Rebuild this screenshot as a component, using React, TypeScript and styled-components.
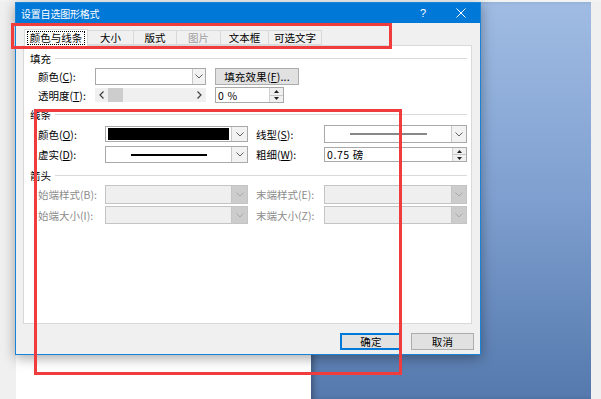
import React from "react";
import styled, { createGlobalStyle } from "styled-components";

const Global = createGlobalStyle`
  html, body { margin: 0; padding: 0; background: #f3f3f3; }
  body { font-family: "Noto Sans CJK SC", "Noto Sans", sans-serif; }
  #root { width: 601px; height: 399px; overflow: hidden; }
`;

const Desktop = styled.div`
  position: relative;
  width: 601px;
  height: 399px;
  box-sizing: border-box;
  padding-top: 2px;
  display: flex;
  background: #f3f3f3;
`;

const Gutter = styled.div<{ $w?: number }>`
  flex: ${(p) => (p.$w ? "none" : "1")};
  width: ${(p) => (p.$w ? `${p.$w}px` : "auto")};
  background: #f0f0f0;
`;

const DocPage = styled.div`
  width: 295px;
  flex: none;
  background: #ffffff;
`;

const Backdrop = styled.div`
  width: 280px;
  flex: none;
  background: linear-gradient(180deg, #a0bce3 0%, #7e9fcf 50%, #5579ad 100%);
  box-shadow: inset 5px 0 6px -3px rgba(0, 0, 0, 0.35);
`;

const Dialog = styled.div`
  position: absolute;
  left: 15px;
  top: 2px;
  width: 466px;
  height: 353px;
  box-sizing: border-box;
  border: 1px solid #1883d7;
  background: #f0f0f0;
  display: flex;
  flex-direction: column;
  box-shadow: 0 3px 12px rgba(0, 0, 0, 0.35);
`;

const TitleBar = styled.div`
  height: 20px;
  flex: none;
  background: #0078d7;
  display: flex;
  align-items: center;
  padding-left: 5px;
  color: #ffffff;
  font-size: 10px;
`;

const TitleText = styled.div`
  flex: 1;
  letter-spacing: -0.2px;
`;

const HelpGlyph = styled.div`
  font-family: "Liberation Sans", sans-serif;
  font-size: 11px;
  width: 8px;
  text-align: center;
  margin-right: 29px;
`;

const CloseBox = styled.div`
  width: 10px;
  height: 10px;
  margin-right: 14px;
  display: flex;
`;

const Body = styled.div`
  flex: 1;
  display: flex;
  flex-direction: column;
  padding: 6px 8px 0 7px;
`;

const TabRow = styled.div`
  height: 17px;
  display: flex;
  align-items: flex-end;
  padding-left: 1px;
  margin-bottom: -1px;
  position: relative;
  z-index: 1;
`;

const Tab = styled.div<{ $w: number; $active?: boolean; $disabled?: boolean }>`
  width: ${(p) => p.$w}px;
  height: ${(p) => (p.$active ? 17 : 15)}px;
  margin-bottom: ${(p) => (p.$active ? 0 : 1)}px;
  margin-right: -1px;
  box-sizing: border-box;
  border: 1px solid #d9d9d9;
  border-bottom: ${(p) => (p.$active ? "none" : "1px solid #d9d9d9")};
  background: ${(p) => (p.$active ? "#ffffff" : "#f0f0f0")};
  color: ${(p) => (p.$disabled ? "#a0a0a0" : "#000000")};
  font-size: 10.5px;
  display: flex;
  align-items: center;
  justify-content: center;
  position: relative;
  z-index: ${(p) => (p.$active ? 2 : 1)};
`;

const Focus = styled.span`
  border: 1px dotted #000000;
  padding: 0 2px;
  line-height: 12px;
`;

const Panel = styled.div`
  height: 279px;
  flex: none;
  box-sizing: border-box;
  border: 1px solid #d9d9d9;
  background: #ffffff;
  padding: 0 4px 0 6px;
  display: flex;
  flex-direction: column;
  position: relative;
  z-index: 0;
`;

const SectionHeader = styled.div<{ $mt: number }>`
  height: 12px;
  margin-top: ${(p) => p.$mt}px;
  display: flex;
  align-items: center;
  font-size: 10.5px;
  color: #000000;
  &::after {
    content: "";
    flex: 1;
    height: 1px;
    background: #dadada;
    margin-left: 4px;
  }
`;

const Row = styled.div<{ $mt: number; $h: number }>`
  height: ${(p) => p.$h}px;
  margin-top: ${(p) => p.$mt}px;
  display: flex;
  align-items: center;
  padding-left: 8px;
`;

const Label = styled.div<{ $w: number; $ml?: number; $disabled?: boolean }>`
  width: ${(p) => p.$w}px;
  margin-left: ${(p) => p.$ml ?? 0}px;
  flex: none;
  font-size: 10.5px;
  white-space: nowrap;
  color: ${(p) => (p.$disabled ? "#8c8c8c" : "#000000")};
  u { text-decoration: underline; text-underline-offset: 1px; }
`;

const Combo = styled.div<{ $w: number; $h: number; $disabled?: boolean; $ml?: number }>`
  width: ${(p) => p.$w}px;
  height: ${(p) => p.$h}px;
  margin-left: ${(p) => p.$ml ?? 0}px;
  flex: none;
  box-sizing: border-box;
  border: 1px solid ${(p) => (p.$disabled ? "#c4c4c4" : "#a9a9a9")};
  background: ${(p) => (p.$disabled ? "#efefef" : "#ffffff")};
  display: flex;
`;

const ComboField = styled.div`
  flex: 1;
  display: flex;
  align-items: center;
  justify-content: center;
  padding: 1px 2px;
`;

const Swatch = styled.div`
  align-self: stretch;
  flex: 1;
  background: #000000;
`;

const LineSample = styled.div<{ $w: number; $color: string; $t: number }>`
  width: ${(p) => p.$w}px;
  height: ${(p) => p.$t}px;
  background: ${(p) => p.$color};
`;

const ComboArrow = styled.div<{ $w: number; $disabled?: boolean }>`
  width: ${(p) => p.$w}px;
  flex: none;
  box-sizing: border-box;
  border-left: 1px solid ${(p) => (p.$disabled ? "#c4c4c4" : "#c8c8c8")};
  background: ${(p) => (p.$disabled ? "#cccccc" : "#f2f2f2")};
  display: flex;
  align-items: center;
  justify-content: center;
`;

const PushButton = styled.div<{ $w: number; $h: number; $ml?: number; $default?: boolean }>`
  width: ${(p) => p.$w}px;
  height: ${(p) => p.$h}px;
  margin-left: ${(p) => p.$ml ?? 0}px;
  flex: none;
  box-sizing: border-box;
  border: 1px solid ${(p) => (p.$default ? "#0078d7" : "#adadad")};
  box-shadow: ${(p) => (p.$default ? "inset 0 0 0 1px #0078d7" : "none")};
  background: #e1e1e1;
  font-size: 10.5px;
  color: #000000;
  display: flex;
  align-items: center;
  justify-content: center;
  white-space: nowrap;
  letter-spacing: 0.2px;
`;

const Slider = styled.div<{ $w: number; $h: number }>`
  width: ${(p) => p.$w}px;
  height: ${(p) => p.$h}px;
  flex: none;
  background: #f0f0f0;
  display: flex;
  align-items: stretch;
`;

const SliderArrow = styled.div<{ $w: number }>`
  width: ${(p) => p.$w}px;
  flex: none;
  display: flex;
  align-items: center;
  justify-content: center;
`;

const SliderThumb = styled.div`
  width: 15px;
  flex: none;
  background: #cdcdcd;
`;

const SliderTrack = styled.div`
  flex: 1;
`;

const Spin = styled.div<{ $w: number; $h: number; $ml?: number }>`
  width: ${(p) => p.$w}px;
  height: ${(p) => p.$h}px;
  margin-left: ${(p) => p.$ml ?? 0}px;
  flex: none;
  box-sizing: border-box;
  border: 1px solid #a9a9a9;
  background: #ffffff;
  display: flex;
`;

const SpinText = styled.div`
  flex: 1;
  display: flex;
  align-items: center;
  padding-left: 2px;
  font-size: 10.5px;
  color: #000000;
  letter-spacing: 0.6px;
  white-space: nowrap;
`;

const SpinButtons = styled.div`
  width: 13px;
  flex: none;
  display: flex;
  flex-direction: column;
  border-left: 1px solid #d0d0d0;
  background: #f0f0f0;
`;

const SpinHalf = styled.div<{ $top?: boolean }>`
  flex: 1;
  display: flex;
  align-items: center;
  justify-content: center;
  border-bottom: ${(p) => (p.$top ? "1px solid #c8c8c8" : "none")};
`;

const Footer = styled.div`
  display: flex;
  justify-content: flex-end;
  margin-top: 9px;
  margin-right: -2px;
`;

const Annotation = styled.div<{ $l: number; $t: number; $w: number; $h: number }>`
  position: absolute;
  left: ${(p) => p.$l}px;
  top: ${(p) => p.$t}px;
  width: ${(p) => p.$w}px;
  height: ${(p) => p.$h}px;
  box-sizing: border-box;
  border: 3px solid #f03c3c;
  pointer-events: none;
  z-index: 10;
`;

const Chevron = ({ color = "#606060" }: { color?: string }) => (
  <svg width="8" height="5" viewBox="0 0 8 5">
    <polyline points="0.5,0.5 4,4 7.5,0.5" fill="none" stroke={color} strokeWidth="1" />
  </svg>
);

const SideChevron = ({ dir }: { dir: "left" | "right" }) => (
  <svg width="5" height="8" viewBox="0 0 5 8">
    <polyline
      points={dir === "left" ? "4.5,0.5 1,4 4.5,7.5" : "0.5,0.5 4,4 0.5,7.5"}
      fill="none"
      stroke="#404040"
      strokeWidth="1.2"
    />
  </svg>
);

const Tri = ({ up }: { up?: boolean }) => (
  <svg width="5" height="3" viewBox="0 0 5 3">
    <polygon points={up ? "0,3 2.5,0 5,3" : "0,0 2.5,3 5,0"} fill="#202020" />
  </svg>
);

const SpinBox = ({ w, h, ml, text }: { w: number; h: number; ml?: number; text: string }) => (
  <Spin $w={w} $h={h} $ml={ml}>
    <SpinText>{text}</SpinText>
    <SpinButtons>
      <SpinHalf $top>
        <Tri up />
      </SpinHalf>
      <SpinHalf>
        <Tri />
      </SpinHalf>
    </SpinButtons>
  </Spin>
);

export default function App() {
  return (
    <>
      <Global />
      <Desktop>
        <Gutter $w={16} />
        <DocPage />
        <Backdrop />
        <Gutter />

        <Dialog>
          <TitleBar>
            <TitleText>设置自选图形格式</TitleText>
            <HelpGlyph>?</HelpGlyph>
            <CloseBox>
              <svg width="10" height="10" viewBox="0 0 10 10">
                <line x1="0.5" y1="0.5" x2="9.5" y2="9.5" stroke="#fff" strokeWidth="1" />
                <line x1="9.5" y1="0.5" x2="0.5" y2="9.5" stroke="#fff" strokeWidth="1" />
              </svg>
            </CloseBox>
          </TitleBar>

          <Body>
            <TabRow>
              <Tab $w={64} $active>
                <Focus>颜色与线条</Focus>
              </Tab>
              <Tab $w={47}>大小</Tab>
              <Tab $w={44}>版式</Tab>
              <Tab $w={45} $disabled>
                图片
              </Tab>
              <Tab $w={49}>文本框</Tab>
              <Tab $w={54}>可选文字</Tab>
            </TabRow>

            <Panel>
              <SectionHeader $mt={6}>填充</SectionHeader>
              <Row $mt={3} $h={18}>
                <Label $w={57}>
                  颜色(<u>C</u>):
                </Label>
                <Combo $w={111} $h={17}>
                  <ComboField />
                  <ComboArrow $w={13}>
                    <Chevron />
                  </ComboArrow>
                </Combo>
                <PushButton $w={84} $h={17} $ml={9}>
                  填充效果(<u>F</u>)...
                </PushButton>
              </Row>
              <Row $mt={2} $h={16}>
                <Label $w={57}>
                  透明度(<u>T</u>):
                </Label>
                <Slider $w={111} $h={14}>
                  <SliderArrow $w={13}>
                    <SideChevron dir="left" />
                  </SliderArrow>
                  <SliderThumb />
                  <SliderTrack />
                  <SliderArrow $w={13}>
                    <SideChevron dir="right" />
                  </SliderArrow>
                </Slider>
                <SpinBox w={69} h={16} ml={9} text="0 %" />
              </Row>

              <SectionHeader $mt={5}>线条</SectionHeader>
              <Row $mt={5} $h={18}>
                <Label $w={67}>
                  颜色(<u>O</u>):
                </Label>
                <Combo $w={143} $h={16}>
                  <ComboField>
                    <Swatch />
                  </ComboField>
                  <ComboArrow $w={16}>
                    <Chevron />
                  </ComboArrow>
                </Combo>
                <Label $w={68} $ml={8}>
                  线型(<u>S</u>):
                </Label>
                <Combo $w={143} $h={18}>
                  <ComboField>
                    <LineSample $w={77} $t={2} $color="#888888" />
                  </ComboField>
                  <ComboArrow $w={15}>
                    <Chevron />
                  </ComboArrow>
                </Combo>
              </Row>
              <Row $mt={3} $h={17}>
                <Label $w={67}>
                  虚实(<u>D</u>):
                </Label>
                <Combo $w={143} $h={17}>
                  <ComboField>
                    <LineSample $w={76} $t={2} $color="#000000" />
                  </ComboField>
                  <ComboArrow $w={16}>
                    <Chevron />
                  </ComboArrow>
                </Combo>
                <Label $w={68} $ml={8}>
                  粗细(<u>W</u>):
                </Label>
                <SpinBox w={143} h={15} text="0.75 磅" />
              </Row>

              <SectionHeader $mt={6}>箭头</SectionHeader>
              <Row $mt={4} $h={19}>
                <Label $w={67} $disabled>
                  始端样式(B):
                </Label>
                <Combo $w={143} $h={19} $disabled>
                  <ComboField />
                  <ComboArrow $w={16} $disabled>
                    <Chevron color="#a8a8a8" />
                  </ComboArrow>
                </Combo>
                <Label $w={68} $ml={8} $disabled>
                  末端样式(E):
                </Label>
                <Combo $w={143} $h={19} $disabled>
                  <ComboField />
                  <ComboArrow $w={15} $disabled>
                    <Chevron color="#a8a8a8" />
                  </ComboArrow>
                </Combo>
              </Row>
              <Row $mt={2} $h={18}>
                <Label $w={67} $disabled>
                  始端大小(I):
                </Label>
                <Combo $w={143} $h={18} $disabled>
                  <ComboField />
                  <ComboArrow $w={16} $disabled>
                    <Chevron color="#a8a8a8" />
                  </ComboArrow>
                </Combo>
                <Label $w={68} $ml={8} $disabled>
                  末端大小(Z):
                </Label>
                <Combo $w={143} $h={18} $disabled>
                  <ComboField />
                  <ComboArrow $w={15} $disabled>
                    <Chevron color="#a8a8a8" />
                  </ComboArrow>
                </Combo>
              </Row>
            </Panel>

            <Footer>
              <PushButton $w={62} $h={17} $default>
                确定
              </PushButton>
              <PushButton $w={63} $h={17} $ml={9}>
                取消
              </PushButton>
            </Footer>
          </Body>
        </Dialog>

        <Annotation $l={11} $t={23} $w={381} $h={26} />
        <Annotation $l={34} $t={109} $w={368} $h={266} />
      </Desktop>
    </>
  );
}
